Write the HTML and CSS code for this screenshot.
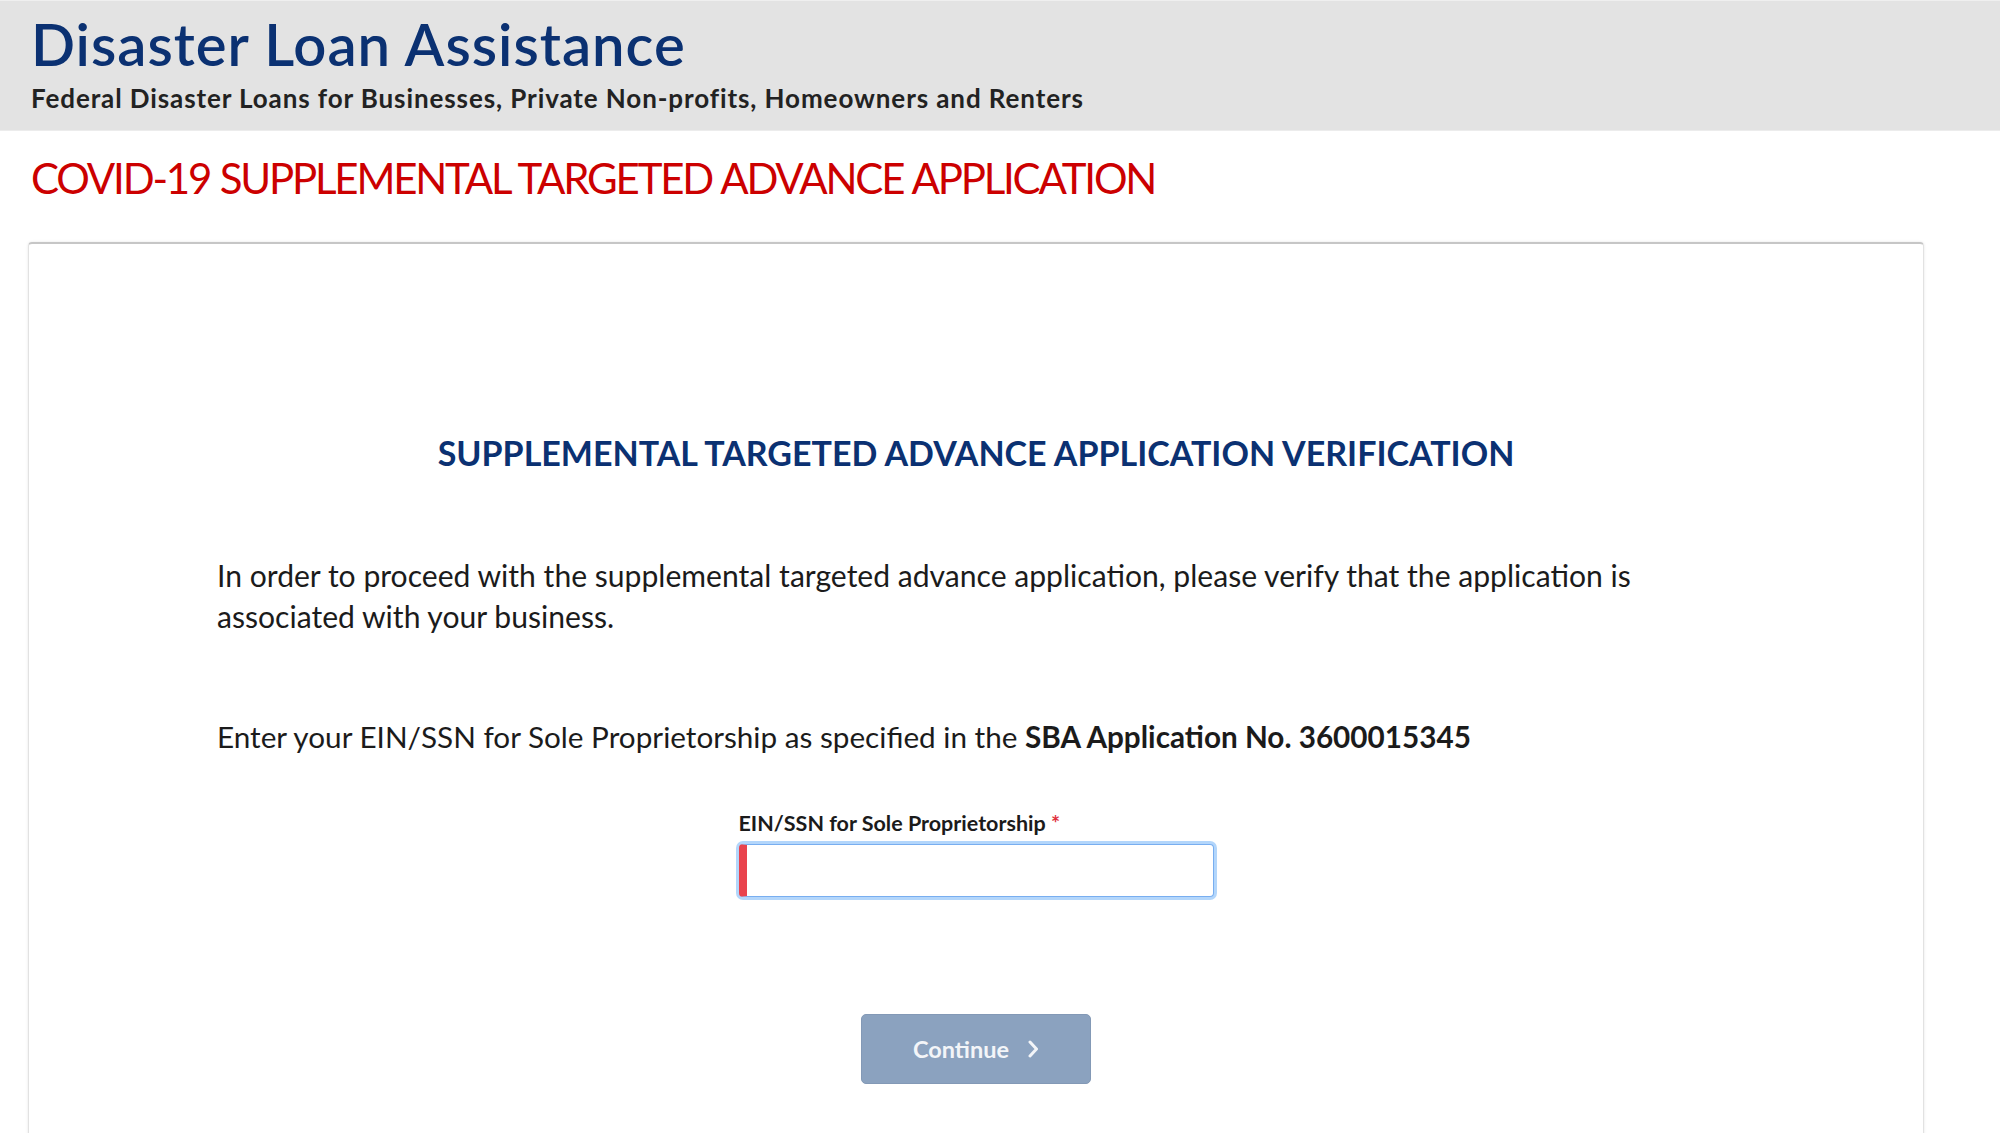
FILE: index.html
```html
<!DOCTYPE html>
<html lang="en">
<head>
<meta charset="utf-8">
<title>Disaster Loan Assistance</title>
<link rel="stylesheet" href="styles.css">
</head>
<body>
<header class="site-header">
  <h1 class="site-title">Disaster Loan Assistance</h1>
  <p class="site-subtitle">Federal Disaster Loans for Businesses, Private Non-profits, Homeowners and Renters</p>
</header>
<main class="page">
  <h2 class="page-title">COVID-19 SUPPLEMENTAL TARGETED ADVANCE APPLICATION</h2>
  <section class="card">
    <h3 class="card-title">SUPPLEMENTAL TARGETED ADVANCE APPLICATION VERIFICATION</h3>
    <p class="intro">In order to proceed with the supplemental targeted advance application, please verify that the application is associated with your business.</p>
    <p class="instruction">Enter your EIN/SSN for Sole Proprietorship as specified in the <strong>SBA Application No. 3600015345</strong></p>
    <div class="field">
      <label class="field-label" for="ein">EIN/SSN for Sole Proprietorship <span class="req">*</span></label>
      <input class="field-input" id="ein" type="text">
    </div>
    <div class="actions">
      <button class="btn-continue" type="button">Continue
        <svg class="chev" width="12" height="18" viewBox="0 0 12 18" aria-hidden="true"><polyline points="3,2 9.5,9 3,16" fill="none" stroke="currentColor" stroke-width="3" stroke-linecap="round" stroke-linejoin="round"/></svg>
      </button>
    </div>
  </section>
</main>
</body>
</html>
```
FILE: styles.css
```css
html, body {
  margin: 0;
  padding: 0;
  background: #ffffff;
}
body {
  font-family: Lato, "Noto Sans", "Liberation Sans", sans-serif;
  color: #1b1b1b;
}
.site-header {
  background: #e3e3e3;
  border-top: 1px solid #efefef;
  border-bottom: 1px solid #ececec;
  padding: 14px 0 17px 31px;
  box-sizing: border-box;
  height: 131px;
}
.site-title {
  margin: 0;
  font-size: 58px;
  line-height: 58px;
  font-weight: 600;
  letter-spacing: 1px;
  color: #0b3172;
}
.site-subtitle {
  margin: 10px 0 0 0;
  font-size: 26px;
  line-height: 30px;
  font-weight: 700;
  letter-spacing: 0.9px;
  color: #222222;
}
.page {
  padding: 0 76px 0 28px;
}
.page-title {
  margin: 21px 0 0 3px;
  font-size: 42px;
  line-height: 52px;
  font-weight: 400;
  letter-spacing: -2.2px;
  word-spacing: 1px;
  color: #cc0000;
}
.card {
  margin-top: 38px;
  border: 1px solid #e2e2e2;
  border-top: 2px solid #c6c6c6;
  border-radius: 4px 4px 0 0;
  box-shadow: 0 0 3px rgba(0,0,0,0.10);
  padding: 189px 188px 60px 188px;
  min-height: 900px;
}
.card-title {
  margin: 0;
  text-align: center;
  font-size: 34px;
  line-height: 40px;
  font-weight: 700;
  color: #0b3172;
}
.intro {
  margin: 82px 0 0 0;
  font-size: 30.1px;
  line-height: 41px;
}
.instruction {
  margin: 79px 0 0 0;
  font-size: 29.7px;
  line-height: 41px;
}
.instruction strong {
  font-weight: 700;
}
.field {
  width: 475px;
  margin: 53px auto 0 auto;
  display: flex;
  flex-direction: column;
}
.field-label {
  font-size: 21.5px;
  line-height: 26px;
  font-weight: 700;
  margin-bottom: 8px;
}
.req {
  color: #e0303c;
}
.field-input {
  box-sizing: border-box;
  width: 475px;
  height: 53px;
  border: 1px solid #78aef0;
  border-left: 8px solid #e9434d;
  border-radius: 4px;
  box-shadow: 0 0 0 3px #b3d6fb;
  outline: none;
  background: #ffffff;
  font-size: 22px;
  font-family: inherit;
  padding: 0 12px;
}
.actions {
  display: flex;
  justify-content: center;
  margin-top: 117px;
}
.btn-continue {
  width: 230px;
  height: 70px;
  background: #8ba2bf;
  border: 1px solid #8399b6;
  border-radius: 5px;
  color: #f3f5f8;
  font-family: inherit;
  font-size: 23.5px;
  font-weight: 700;
  display: flex;
  align-items: center;
  justify-content: center;
  gap: 18px;
  padding: 0;
}
.chev {
  display: block;
}
```
